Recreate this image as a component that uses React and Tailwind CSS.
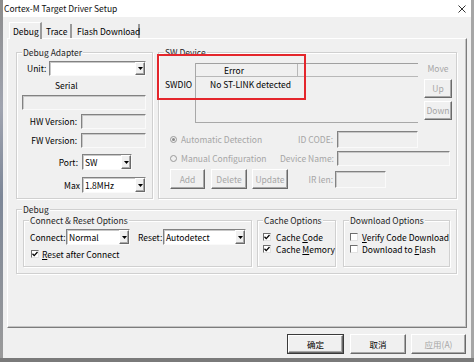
import React from "react";

const sunken =
  "border border-t-[#828282] border-l-[#828282] border-r-[#fafafa] border-b-[#fafafa] shadow-[inset_1px_1px_0_#c8c8c8]";
const raised =
  "border border-t-white border-l-white border-r-[#6a6a6a] border-b-[#6a6a6a] shadow-[inset_-1px_-1px_0_#a8a8a8]";

const Field = ({ className = "", children }) => (
  <div className={`${sunken} bg-[#f0f0f0] flex items-center pl-[3px] leading-none ${className}`}>
    {children}
  </div>
);

const Combo = ({ value, className = "" }) => (
  <div className={`${sunken} bg-white flex items-stretch ${className}`}>
    <span className="flex-1 flex items-center pl-[2px] leading-none whitespace-nowrap">{value}</span>
    <span className={`${raised} w-[10px] bg-[#f0f0f0] flex items-center justify-center`}>
      <svg width="5" height="3" viewBox="0 0 5 3">
        <path d="M0 0h5L2.5 3z" fill="#000" />
      </svg>
    </span>
  </div>
);

const Button = ({ children, disabled, className = "" }) => (
  <div
    className={`${raised} bg-[#f0f0f0] flex items-center justify-center leading-none whitespace-nowrap ${
      disabled ? "text-[#a6a6a6]" : "text-black"
    } ${className}`}
  >
    {children}
  </div>
);

const Group = ({ title, className = "", children }) => (
  <div className={`relative border border-[#d0d0d0] shadow-[1px_1px_0_#fff,inset_1px_1px_0_#fff] ${className}`}>
    <span className="absolute -top-[5px] left-[5px] bg-[#f0f0f0] px-[1px] leading-[9px] text-[#1e1e1e] whitespace-nowrap">
      {title}
    </span>
    {children}
  </div>
);

const Check = ({ checked }) => (
  <span className="w-[8px] h-[8px] shrink-0 border border-t-[#6e6e6e] border-l-[#6e6e6e] border-r-[#e2e2e2] border-b-[#e2e2e2] bg-white flex items-center justify-center">
    {checked && (
      <svg width="6" height="6" viewBox="0 0 6 6">
        <path d="M0.5 2.8 L2.2 4.6 L5.5 1" stroke="#000" strokeWidth="1.3" fill="none" />
      </svg>
    )}
  </span>
);

const Radio = ({ checked, label }) => (
  <div className="flex items-center text-[#a6a6a6] whitespace-nowrap">
    <span className="w-[7px] h-[7px] rounded-full border border-[#9a9a9a] bg-[#f0f0f0] flex items-center justify-center">
      {checked && <span className="w-[3px] h-[3px] rounded-full bg-[#8a8a8a]" />}
    </span>
    <span className="ml-[4px]">{label}</span>
  </div>
);

export default function App() {
  return (
    <div className="w-[474px] h-[362px] overflow-hidden bg-[#f0f0f0] flex flex-col text-[8.5px] text-black font-['Noto_Sans_CJK_SC','Noto_Sans',sans-serif]">
      <div className="flex h-[358px]">
        <div className="w-[3px] bg-[linear-gradient(180deg,#8c8c8c,#a0a4b0_30%,#7d8798_55%,#9a9a9a)]" />
        <div className="w-[468px] flex flex-col">
          {/* title bar */}
          <div className="h-[17px] bg-white flex items-center justify-between pl-[1px] pr-[5px]">
            <span className="leading-none text-[#111] whitespace-nowrap">Cortex-M Target Driver Setup</span>
            <svg width="8" height="8" viewBox="0 0 8 8">
              <path d="M0.5 0.5L7.5 7.5M7.5 0.5L0.5 7.5" stroke="#333" strokeWidth="1" />
            </svg>
          </div>

          {/* tabs */}
          <div className="h-[21px] flex items-end pl-[6px] whitespace-nowrap">
            <div className="h-[17px] w-[33px] flex items-center pl-[3px] border-t border-l border-white border-r-2 border-r-[#9a9a9a] mb-[-1px] bg-[#f0f0f0] z-10">
              Debug
            </div>
            <div className="h-[14px] w-[30px] flex items-center pl-[4px] border-r-2 border-[#9a9a9a]">Trace</div>
            <div className="h-[14px] w-[68px] flex items-center pl-[5px] border-r-2 border-[#9a9a9a]">
              Flash Download
            </div>
          </div>

          {/* panel */}
          <div className="ml-[4px] w-[460px] h-[290px] border border-t-white border-l-white border-r-[#7c7c7c] border-b-[#7c7c7c] shadow-[inset_-1px_-1px_0_#c4c4c4] pl-[8px] pt-[13px]">
            <div className="flex gap-[5px] h-[147px]">
              {/* Debug Adapter */}
              <Group title="Debug Adapter" className="w-[137px] h-[147px]">
                <div className="flex flex-col whitespace-nowrap">
                  <div className="flex items-center mt-[8px] pl-[10px] h-[15px]">
                    <span className="w-[22px]">Unit:</span>
                    <Combo value="" className="w-[97px] h-[15px]" />
                  </div>
                  <div className="h-[18px] leading-[18px] pl-[38px]">Serial</div>
                  <Field className="mt-[1px] ml-[5px] w-[124px] h-[15px]" />
                  <div className="flex items-center mt-[4px] h-[15px]">
                    <span className="w-[60px] text-right">HW Version:</span>
                    <Field className="ml-[4px] w-[65px] h-[15px]" />
                  </div>
                  <div className="flex items-center mt-[4px] h-[15px]">
                    <span className="w-[60px] text-right">FW Version:</span>
                    <Field className="ml-[4px] w-[65px] h-[15px]" />
                  </div>
                  <div className="flex items-center mt-[6px] h-[16px]">
                    <span className="w-[61px] text-right">Port:</span>
                    <Combo value="SW" className="ml-[4px] w-[50px] h-[16px]" />
                  </div>
                  <div className="flex items-center mt-[7px] h-[16px]">
                    <span className="w-[63px] text-right">Max</span>
                    <Combo value="1.8MHz" className="ml-[2px] w-[64px] h-[16px]" />
                  </div>
                </div>
              </Group>

              {/* SW Device */}
              <Group title="SW Device" className="w-[299px] h-[147px]">
                <div className="absolute left-[-2px] top-[1px] w-[149px] h-[46px] border-2 border-[#e4262c]" />
                <div className="flex mt-[10px] h-[60px] whitespace-nowrap">
                  <div className="w-[36px] pl-[6px] pt-[16px] leading-[11px]">SWDIO</div>
                  <div className="w-[223px] h-[60px] border-l border-b border-[#a8a8a8]">
                    <div className="h-[14px] flex border-t border-b border-t-[#a0a0a0] border-b-[#b8b8b8]">
                      <span className="w-[102px] border-r border-[#b8b8b8] pl-[28px] flex items-center leading-none">
                        Error
                      </span>
                    </div>
                    <div className="h-[14px] flex items-center pl-[14px] leading-none">No ST-LINK detected</div>
                  </div>
                  <div className="ml-[6px] w-[28px] flex flex-col">
                    <span className="h-[11px] leading-[11px] text-center text-[#a6a6a6]">Move</span>
                    <Button disabled className="mt-[5px] h-[19px]">
                      Up
                    </Button>
                    <Button disabled className="mt-[3px] h-[19px]">
                      Down
                    </Button>
                  </div>
                </div>
                <div className="mt-[8px] pl-[11px] grid grid-cols-[110px_53px_auto] grid-rows-[17px_15px_20px] gap-y-[3px] items-center">
                  <Radio checked label="Automatic Detection" />
                  <span className="text-right text-[#a6a6a6] whitespace-nowrap">ID CODE:</span>
                  <Field className="ml-[4px] w-[81px] h-[17px]" />
                  <Radio label="Manual Configuration" />
                  <span className="text-right text-[#a6a6a6] whitespace-nowrap">Device Name:</span>
                  <Field className="ml-[4px] w-[113px] h-[15px]" />
                  <div className="flex w-[118px] h-[20px]">
                    <Button disabled className="w-[35px] h-[20px]">
                      Add
                    </Button>
                    <Button disabled className="ml-[6px] w-[36px] h-[20px]">
                      Delete
                    </Button>
                    <Button disabled className="ml-[5px] w-[36px] h-[20px]">
                      Update
                    </Button>
                  </div>
                  <span className="text-right text-[#a6a6a6] whitespace-nowrap">IR len:</span>
                  <Field className="ml-[2px] w-[51px] h-[17px]" />
                </div>
              </Group>
            </div>

            {/* Debug */}
            <Group title="Debug" className="mt-[10px] w-[441px] h-[65px]">
              <div className="flex mt-[10px] pl-[6px] whitespace-nowrap">
                <Group title="Connect & Reset Options" className="w-[229px] h-[47px]">
                  <div className="flex items-center mt-[8px] pl-[6px] h-[16px]">
                    <span className="w-[36px]">Connect:</span>
                    <Combo value="Normal" className="w-[64px] h-[16px]" />
                    <span className="ml-[8px] w-[25px]">Reset:</span>
                    <Combo value="Autodetect" className="w-[83px] h-[16px]" />
                  </div>
                  <div className="flex items-center mt-[4px] pl-[7px] h-[10px]">
                    <Check checked />
                    <span className="ml-[3px] leading-none">
                      <u className="underline-offset-1">R</u>eset after Connect
                    </span>
                  </div>
                </Group>
                <Group title="Cache Options" className="ml-[5px] w-[79px] h-[47px]">
                  <div className="mt-[10px] pl-[5px] flex flex-col">
                    <div className="flex items-center h-[12px]">
                      <Check checked />
                      <span className="ml-[5px] leading-none">
                        Cache <u className="underline-offset-1">C</u>ode
                      </span>
                    </div>
                    <div className="flex items-center h-[12px]">
                      <Check checked />
                      <span className="ml-[5px] leading-none">
                        Cache <u className="underline-offset-1">M</u>emory
                      </span>
                    </div>
                  </div>
                </Group>
                <Group title="Download Options" className="ml-[7px] w-[107px] h-[47px]">
                  <div className="mt-[10px] pl-[6px] pr-[1px] flex flex-col overflow-hidden">
                    <div className="flex items-center h-[12px]">
                      <Check />
                      <span className="ml-[4px] leading-none">
                        <u className="underline-offset-1">V</u>erify Code Download
                      </span>
                    </div>
                    <div className="flex items-center h-[12px]">
                      <Check />
                      <span className="ml-[4px] leading-none">
                        Download to <u className="underline-offset-1">F</u>lash
                      </span>
                    </div>
                  </div>
                </Group>
              </div>
            </Group>
          </div>

          {/* dialog buttons */}
          <div className="h-[30px] flex justify-end items-start pt-[6px] pr-[5px]">
            <div className="w-[57px] h-[20px] border border-[#3a3a3a] flex">
              <Button className="flex-1">确定</Button>
            </div>
            <Button className="ml-[6px] w-[56px] h-[20px]">取消</Button>
            <Button disabled className="ml-[5px] w-[55px] h-[20px]">
              应用(A)
            </Button>
          </div>
        </div>
        <div className="w-[3px] bg-[#a6a6a6]" />
      </div>
      <div className="h-[4px] bg-[#7a7a7a]" />
    </div>
  );
}
